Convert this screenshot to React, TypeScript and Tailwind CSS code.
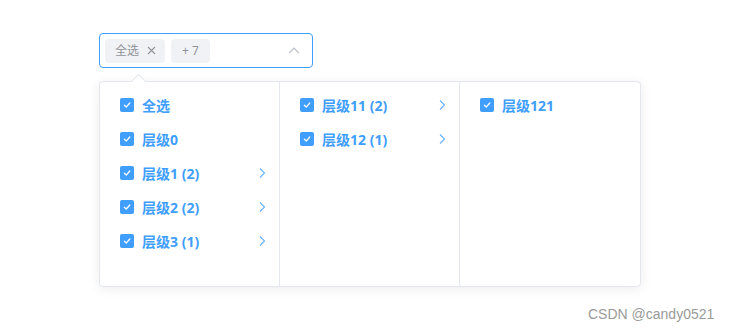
import React from 'react';

type Item = { label: string; more?: boolean };

const columns: Item[][] = [
  [
    { label: '全选' },
    { label: '层级0' },
    { label: '层级1 (2)', more: true },
    { label: '层级2 (2)', more: true },
    { label: '层级3 (1)', more: true },
  ],
  [
    { label: '层级11 (2)', more: true },
    { label: '层级12 (1)', more: true },
  ],
  [{ label: '层级121' }],
];

const font = { fontFamily: '"Noto Sans", "Noto Sans CJK SC", sans-serif' };

function Checkbox() {
  return (
    <span className="flex h-[14px] w-[14px] shrink-0 items-center justify-center rounded-[2px] bg-[#409eff]">
      <svg width="10" height="10" viewBox="0 0 10 10" fill="none">
        <polyline points="2.3,5.2 4.3,7 7.8,3" stroke="white" strokeWidth="1.2" strokeLinecap="round" strokeLinejoin="round" />
      </svg>
    </span>
  );
}

function Chevron() {
  return (
    <svg width="7" height="11" viewBox="0 0 7 11" fill="none" className="absolute right-[13px] top-1/2 -translate-y-1/2">
      <polyline points="1,1 5.5,5.5 1,10" stroke="#66b1ff" strokeWidth="1.1" />
    </svg>
  );
}

export default function App() {
  return (
    <div className="min-h-[331px] w-[730px] bg-white" style={font}>
      <div className="pl-[99px] pt-[33px]">
        {/* input */}
        <div className="flex h-[35px] w-[214px] items-center rounded-[4px] border border-[#409eff] pl-[5px] pr-[12px]">
          <div className="flex flex-1 items-center gap-[6px]">
            <span className="flex h-[24px] items-center gap-[8px] rounded-[4px] bg-[#f0f2f5] pl-[10px] pr-[9px] text-[12px] text-[#909399]">
              全选
              <svg width="9" height="9" viewBox="0 0 9 9" fill="none">
                <path d="M1 1 L8 8 M8 1 L1 8" stroke="#909399" strokeWidth="1.1" />
              </svg>
            </span>
            <span className="flex h-[24px] items-center whitespace-pre rounded-[4px] bg-[#f0f2f5] px-[11px] text-[12px] text-[#909399]">
              {'+ 7'}
            </span>
          </div>
          <svg width="12" height="7" viewBox="0 0 12 7" fill="none">
            <polyline points="1,6 6,1.2 11,6" stroke="#c0c4cc" strokeWidth="1.2" />
          </svg>
        </div>

        {/* dropdown */}
        <div className="relative mt-[13px] flex h-[206px] w-[542px] rounded-[4px] border border-[#e4e7ed] bg-white shadow-[0_2px_12px_rgba(0,0,0,0.08)]">
          <span className="absolute -top-[6px] left-[33px] h-[11px] w-[11px] rotate-45 border-l border-t border-[#e4e7ed] bg-white" />
          {columns.map((col, i) => (
            <div
              key={i}
              className={`w-[180px] py-[6px] ${i < columns.length - 1 ? 'border-r border-[#e4e7ed]' : ''}`}
            >
              {col.map((item) => (
                <div key={item.label} className="relative flex h-[34px] items-center gap-[8px] pl-[20px] pr-[30px]">
                  <Checkbox />
                  <span className="text-[14px] font-bold text-[#409eff]">{item.label}</span>
                  {item.more && <Chevron />}
                </div>
              ))}
            </div>
          ))}
        </div>
      </div>
      <div
        className="absolute left-[588px] top-[304px] text-[14px] text-[#9a9a9a]"
        style={{ fontFamily: '"Liberation Sans", Arial, sans-serif' }}
      >
        CSDN @candy0521
      </div>
    </div>
  );
}
